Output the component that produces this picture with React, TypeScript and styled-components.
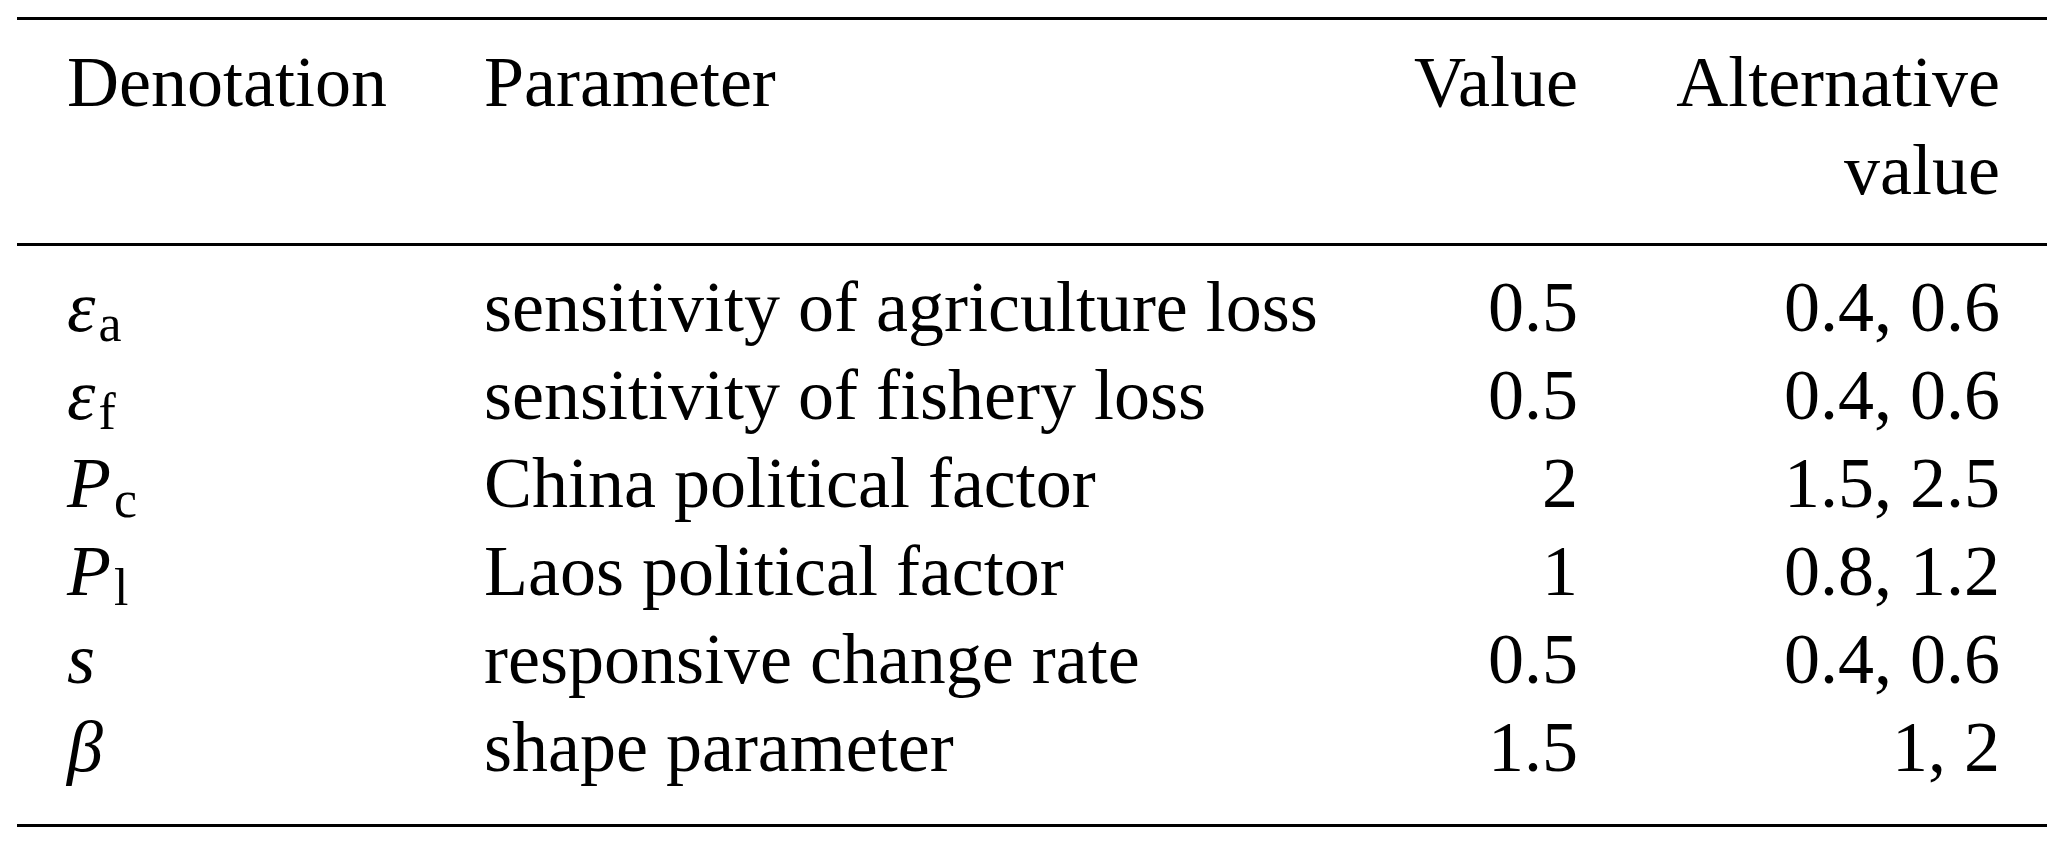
import React, { FC } from "react";
import styled, { createGlobalStyle } from "styled-components";

const GlobalStyle = createGlobalStyle`
  html, body {
    margin: 0;
    padding: 0;
    background: #ffffff;
  }
  body {
    font-family: "Liberation Serif", "Times New Roman", serif;
    color: #000000;
  }
`;

type Row = {
  symbol: string;
  sub: string;
  name: string;
  value: string;
  alt: string;
};

const ROWS: Row[] = [
  { symbol: "ε", sub: "a", name: "sensitivity of agriculture loss", value: "0.5", alt: "0.4, 0.6" },
  { symbol: "ε", sub: "f", name: "sensitivity of fishery loss", value: "0.5", alt: "0.4, 0.6" },
  { symbol: "P", sub: "c", name: "China political factor", value: "2", alt: "1.5, 2.5" },
  { symbol: "P", sub: "l", name: "Laos political factor", value: "1", alt: "0.8, 1.2" },
  { symbol: "s", sub: "", name: "responsive change rate", value: "0.5", alt: "0.4, 0.6" },
  { symbol: "β", sub: "", name: "shape parameter", value: "1.5", alt: "1, 2" },
];

const Table = styled.div`
  margin: 17px 20px 0 17px;
  width: 2030px;
  font-size: 72px;
  line-height: 88px;
`;

const Section = styled.div<{ $head?: boolean }>`
  display: grid;
  grid-template-columns: 417px 922px 172px 422px;
  padding: ${p => (p.$head ? "18px 47px 29px 50px" : "17px 47px 33px 50px")};
  border-top: ${p => (p.$head ? "3px solid #000" : "none")};
  border-bottom: 3px solid #000;
`;

const Cell = styled.div<{ $right?: boolean }>`
  text-align: ${p => (p.$right ? "right" : "left")};
  white-space: nowrap;
`;

const Symbol = styled.span`
  font-style: italic;
`;

const Sub = styled.sub`
  font-size: 0.72em;
  font-style: normal;
  vertical-align: -0.2em;
  line-height: 0;
  margin-left: 3px;
`;

const App: FC = () => (
  <>
    <GlobalStyle />
    <Table>
      <Section $head>
        <Cell>Denotation</Cell>
        <Cell>Parameter</Cell>
        <Cell $right>Value</Cell>
        <Cell $right>
          Alternative
          <br />
          value
        </Cell>
      </Section>
      <Section>
        {ROWS.map(r => (
          <React.Fragment key={r.name}>
            <Cell>
              <Symbol>{r.symbol}</Symbol>
              {r.sub && <Sub>{r.sub}</Sub>}
            </Cell>
            <Cell>{r.name}</Cell>
            <Cell $right>{r.value}</Cell>
            <Cell $right>{r.alt}</Cell>
          </React.Fragment>
        ))}
      </Section>
    </Table>
  </>
);

export default App;
